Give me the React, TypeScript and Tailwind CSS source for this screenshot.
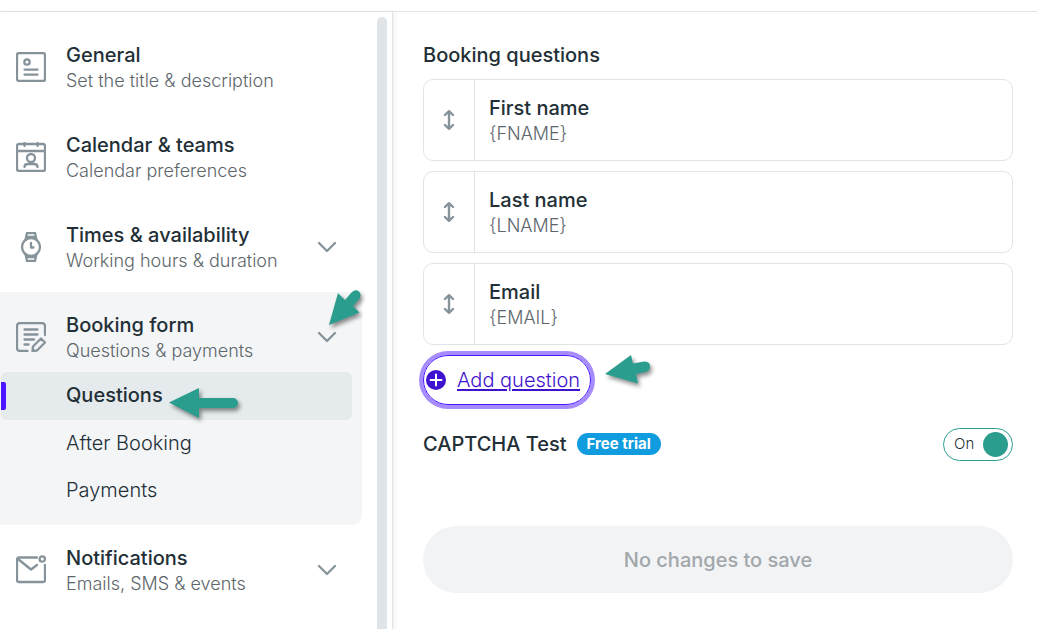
import { useState } from "react";
import type { ReactNode } from "react";

function Icon({ children }: { children: ReactNode }) {
  return (
    <svg
      viewBox="0 0 30 30"
      className="size-[30px] shrink-0 text-[#87939a]"
      fill="none"
      stroke="currentColor"
      strokeWidth="2.3"
      strokeLinecap="round"
      strokeLinejoin="round"
      aria-hidden="true"
    >
      {children}
    </svg>
  );
}

const generalIcon = (
  <Icon>
    <rect x="1" y="1" width="28" height="28" rx="2" />
    <circle cx="11" cy="10" r="2.7" />
    <path d="M8.500 17.600h13M8.500 22.600h13" />
  </Icon>
);

const calendarIcon = (
  <Icon>
    <rect x="1" y="2" width="28" height="27" rx="2" />
    <path d="M1 9h28M8.500 1v3M21.500 1v3" />
    <circle cx="15" cy="16" r="4" />
    <path d="M8.500 25c0-2.600 1.500-3 3.500-3h6c2 0 3.500.4 3.500 3" />
  </Icon>
);

const watchIcon = (
  <Icon>
    <circle cx="15" cy="15" r="9" />
    <path d="M9.500 8 11 1h8l1.500 7M9.500 22l1.500 7h8l1.500-7M10.500 5h9M10.500 25h9" />
    <path d="M15 11v4.500h2.500" />
  </Icon>
);

const formIcon = (
  <Icon>
    <path d="M29 13V4a3 3 0 0 0-3-3H4a3 3 0 0 0-3 3v22a3 3 0 0 0 3 3h7.500" />
    <path d="M8.500 7.500h13M8.500 12.500h13M8.500 17.500h9.500M8.500 22.500h4" />
    <path d="m16.500 29 .5-4.500 8-8 4 4-8 8z" />
  </Icon>
);

const mailIcon = (
  <Icon>
    <path d="M21 2.500H3a2 2 0 0 0-2 2V25a2 2 0 0 0 2 2h24a2 2 0 0 0 2-2V10" />
    <path d="m2 4 13 10.500L21 10" />
    <circle cx="26.300" cy="4" r="2.700" />
  </Icon>
);

function Chevron() {
  return (
    <svg
      viewBox="0 0 18 10"
      className="h-[10px] w-[18px] shrink-0 overflow-visible text-[#87939a]"
      fill="none"
      stroke="currentColor"
      strokeWidth="2.3"
      strokeLinecap="round"
      strokeLinejoin="round"
      aria-hidden="true"
    >
      <path d="m1 1 8 8 8-8" />
    </svg>
  );
}

function NavRow({
  icon,
  title,
  text,
  expandable,
}: {
  icon: ReactNode;
  title: string;
  text: string;
  expandable?: boolean;
}) {
  return (
    <button type="button" className="flex w-full items-center gap-5 pt-[19px] pr-[26px] pl-4 text-left">
      {icon}
      <span className="flex flex-1 flex-col">
        <span className="text-xl leading-7 font-medium">{title}</span>
        <span className="text-lg leading-6 font-light text-[#5d666b]">{text}</span>
      </span>
      {expandable && <Chevron />}
    </button>
  );
}

function Question({ name, tag }: { name: string; tag: string }) {
  return (
    <li className="flex rounded-[10px] border border-[#dfe4e8]">
      <button
        type="button"
        aria-label={`Move ${name}`}
        className="flex w-[51px] items-center justify-center border-r border-[#dfe4e8] text-[#87939a]"
      >
        <svg
          viewBox="0 0 12 20"
          className="h-5 w-3 overflow-visible"
          fill="none"
          stroke="currentColor"
          strokeWidth="2.4"
          strokeLinecap="round"
          strokeLinejoin="round"
        >
          <path d="M6 1.500v17M2 5l4-3.800L10 5M2 15l4 3.800 4-3.800" />
        </svg>
      </button>
      <div className="flex flex-col px-[14px] py-[14px]">
        <span className="text-xl leading-7 font-medium">{name}</span>
        <span className="text-lg leading-6 font-light text-[#5d666b]">{tag}</span>
      </div>
    </li>
  );
}

const arrow =
  "pointer-events-none absolute overflow-visible text-[#2a9d8f] drop-shadow-[2px_3px_2px_rgba(0,0,0,0.45)]";

export default function App() {
  const [captcha, setCaptcha] = useState(true);

  return (
    <div className="flex min-h-screen flex-col bg-white font-['Inter',sans-serif] text-[#232f36]">
      <header className="h-3 border-b border-[#dfe4e8]" />
      <div className="flex flex-1">
        <aside className="flex w-[393px] shrink-0 border-r border-[#dfe4e8] shadow-[2px_0_4px_rgba(0,0,0,0.06)]">
          <nav className="flex-1 pt-[10px]" aria-label="Settings">
            <div className="flex flex-col gap-[19px] pb-[19px]">
              <NavRow icon={generalIcon} title="General" text="Set the title & description" />
              <NavRow icon={calendarIcon} title="Calendar & teams" text="Calendar preferences" />
              <NavRow icon={watchIcon} title="Times & availability" text="Working hours & duration" expandable />
            </div>
            <section className="relative rounded-r-[10px] bg-[#f3f5f7] pb-[10px]">
              <NavRow icon={formIcon} title="Booking form" text="Questions & payments" expandable />
              <svg viewBox="0 0 32 34" className={`${arrow} top-0 right-px h-[34px] w-8`} aria-hidden="true">
                <path
                  d="M0 33 9 1l7 7 6.500-7.500Q26-3 29.500-1 33 2 30.700 6.500L24 14l6.500 6.500z"
                  fill="currentColor"
                />
              </svg>
              <ul className="pt-[9px] text-xl">
                <li className="pr-[10px] pl-px">
                  <a
                    href="#questions"
                    aria-current="page"
                    className="relative flex h-12 items-center rounded-md bg-[#e5eaec] font-medium"
                  >
                    <span className="mr-[60px] h-7 w-[5px] rounded-r-[2px] bg-[#4a16ff]" />
                    <span className="pb-[2px]">Questions</span>
                    <svg viewBox="0 0 69 30" className={`${arrow} top-4 left-[168px] h-[30px] w-[69px]`} aria-hidden="true">
                      <path d="M0 14.500 30 0v10h34a5 5 0 0 1 0 10H30v10z" fill="currentColor" />
                    </svg>
                  </a>
                </li>
                <li>
                  <a href="#after-booking" className="flex h-[47px] items-center pb-[2px] pl-[66px] font-light">
                    After Booking
                  </a>
                </li>
                <li>
                  <a href="#payments" className="flex h-12 items-center pb-[2px] pl-[66px] font-light">
                    Payments
                  </a>
                </li>
              </ul>
            </section>
            <NavRow icon={mailIcon} title="Notifications" text="Emails, SMS & events" expandable />
          </nav>
          <div className="mt-[5px] mr-[5px] ml-[15px] w-[10px] rounded-t-full bg-[#dfe4e8]" />
        </aside>

        <main className="flex-1 pt-[30px] pr-6 pb-9 pl-[30px]">
          <h2 className="text-xl leading-[26px] font-medium">Booking questions</h2>
          <ul className="mt-[11px] flex flex-col gap-[10px]">
            <Question name="First name" tag="{FNAME}" />
            <Question name="Last name" tag="{LNAME}" />
            <Question name="Email" tag="{EMAIL}" />
          </ul>

          <div className="mt-[10px] flex">
            <button
              type="button"
              className="relative flex h-[50px] items-center gap-[11px] rounded-full border border-[#4a16ff] pr-[10px] pl-[2px] text-xl font-light text-[#3f12cf] ring-4 ring-[#a68cff]"
            >
              <svg viewBox="0 0 20 20" className="size-5" aria-hidden="true">
                <circle cx="10" cy="10" r="10" fill="currentColor" />
                <path d="M10 4.500v11M4.500 10h11" stroke="white" strokeWidth="2" strokeLinecap="round" />
              </svg>
              <span className="underline decoration-2 underline-offset-2">Add question</span>
              <svg viewBox="0 0 45 30" className={`${arrow} -top-px left-[181px] h-[30px] w-[45px]`} aria-hidden="true">
                <path d="M0 19 26 0l2 8.500 11-2q6 0 6 5 0 4-4 5.500l-10 2 2 9.500z" fill="currentColor" />
              </svg>
            </button>
          </div>

          <div className="mt-[23px] flex items-center justify-between">
            <div className="flex items-center gap-[10px] pb-[2px]">
              <span id="captcha-label" className="text-xl leading-[26px] font-medium">
                CAPTCHA Test
              </span>
              <span className="rounded-full bg-[#109cde] px-[10px] text-[15px] leading-[22px] font-bold text-white">
                Free trial
              </span>
            </div>
            <label className="flex h-[33px] w-[70px] cursor-pointer items-center justify-between rounded-full border border-[#2a9d8f] pr-1 pl-[10px] text-[15px] has-[:focus-visible]:ring-2">
              <input
                type="checkbox"
                role="switch"
                aria-labelledby="captcha-label"
                checked={captcha}
                onChange={(e) => setCaptcha(e.target.checked)}
                className="peer sr-only"
              />
              <span className="font-light">{captcha ? "On" : "Off"}</span>
              <span className="size-[25px] rounded-full bg-[#c5ccd0] peer-checked:bg-[#2a9d8f]" />
            </label>
          </div>

          <button
            type="button"
            disabled
            className="mt-[65px] h-[67px] w-full rounded-full bg-[#f2f3f5] text-xl font-medium text-[#a1a7aa]"
          >
            No changes to save
          </button>
        </main>
      </div>
    </div>
  );
}
